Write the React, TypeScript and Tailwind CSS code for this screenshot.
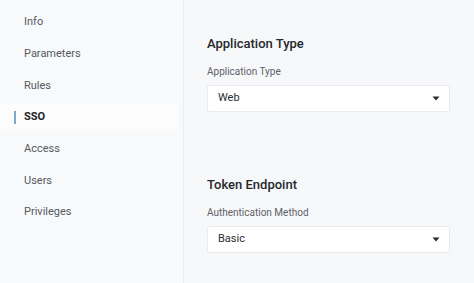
import { useState } from "react"

const tabs = ["Info", "Parameters", "Rules", "SSO", "Access", "Users", "Privileges"]

function Caret() {
  return (
    <svg width="8" height="5" viewBox="0 0 8 5" className="shrink-0 mr-[1px]">
      <path d="M0.5 0.5h7L4 4.5z" fill="#2b2b2b" />
    </svg>
  )
}

function SelectField({ label, value }: { label: string; value: string }) {
  return (
    <div className="flex flex-col">
      <label className="text-[10px] leading-[14px] text-[#5d6167] mb-[6px]">{label}</label>
      <div className="h-[27px] w-[243px] bg-white border border-[#e8eaed] rounded-[2px] flex items-center justify-between pl-[10px] pr-[8px]">
        <span className="text-[11px] text-[#2a2d31]">{value}</span>
        <Caret />
      </div>
    </div>
  )
}

export default function App() {
  const [active, setActive] = useState("SSO")

  return (
    <div
      className="w-[474px] h-[283px] flex bg-[#f7f8fa] overflow-hidden"
      style={{ fontFamily: "Roboto, 'Liberation Sans', sans-serif" }}
    >
      <nav className="w-[184px] shrink-0 h-full bg-[#f8f9fb] border-r border-[#eceef1] pt-[9px] flex flex-col">
        {tabs.map((t) => {
          const isActive = t === active
          return (
            <button
              key={t}
              onClick={() => setActive(t)}
              className={
                isActive
                  ? "relative h-[27px] mb-[4.7px] w-[178px] flex items-center pl-[24px] text-left text-[11px] font-bold text-[#1f2226] bg-[#fcfcfd]"
                  : "relative h-[27px] mb-[4.7px] w-[178px] flex items-center pl-[24px] text-left text-[11px] text-[#555a60]"
              }
            >
              {isActive && <span className="absolute left-[14px] top-[7px] h-[13px] w-[2px] bg-[#7fa9c9]" />}
              {t}
            </button>
          )
        })}
      </nav>

      <main className="flex-1 pl-[23px] pt-[35px] flex flex-col">
        <section className="flex flex-col">
          <h2 className="text-[13px] leading-[18px] font-medium text-[#25282c] mb-[12px]">Application Type</h2>
          <SelectField label="Application Type" value="Web" />
        </section>
        <section className="flex flex-col mt-[64px]">
          <h2 className="text-[13px] leading-[18px] font-medium text-[#25282c] mb-[12px]">Token Endpoint</h2>
          <SelectField label="Authentication Method" value="Basic" />
        </section>
      </main>
    </div>
  )
}
